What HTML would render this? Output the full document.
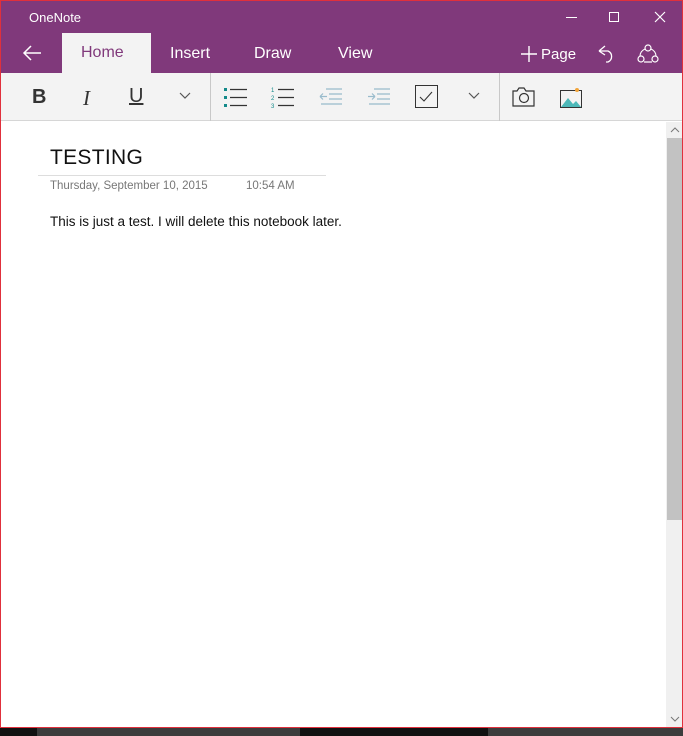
<!DOCTYPE html>
<html><head><meta charset="utf-8"><style>
*{margin:0;padding:0;box-sizing:border-box}
body{width:683px;height:736px;overflow:hidden;background:#111;font-family:"Liberation Sans",sans-serif;position:relative}
.win{position:absolute;left:0;top:0;width:683px;height:728px;border:1px solid #e0303c;background:#fff;overflow:hidden}
.title{position:absolute;left:0;top:0;width:681px;height:72px;background:#80397b;color:#fff}
.t{position:absolute;font-size:13px;left:28px;top:9px}
.tab{position:absolute;top:44px;font-size:16px;color:#fff}
.home{position:absolute;left:61px;top:32px;width:89px;height:40px;background:#f3f3f3;color:#80397b;font-size:16px;padding-top:11px;padding-left:19px}
.tool{position:absolute;left:0;top:72px;width:681px;height:48px;background:#f3f3f3;border-bottom:1px solid #d6d6d6}
.sep{position:absolute;top:0;width:1px;height:48px;background:#c8c8c8}
svg{position:absolute}
.sb{position:absolute;left:665px;top:121px;width:17px;height:606px;background:#f0f0f0}
.thumb{position:absolute;left:666px;top:137px;width:15px;height:382px;background:#c2c2c2}
</style></head><body>
<div class="win">
<div class="title">
<div class="t">OneNote</div>
<div style="position:absolute;left:565px;top:16px;width:11px;height:1px;background:#fff"></div>
<div style="position:absolute;left:608px;top:11px;width:10px;height:10px;border:1px solid #fff"></div>
<svg style="left:653px;top:10px" width="12" height="12"><path d="M1 1L11 11M11 1L1 11" stroke="#fff" stroke-width="1.2"/></svg>
<svg style="left:21px;top:44px" width="20" height="16"><path d="M19 8H2M9 1L2 8L9 15" stroke="#fff" stroke-width="1.5" fill="none"/></svg>
<div class="home">Home</div>
<div class="tab" style="left:169px">Insert</div>
<div class="tab" style="left:253px">Draw</div>
<div class="tab" style="left:337px">View</div>
<svg style="left:519px;top:44px" width="18" height="18"><path d="M9 1V17M1 9H17" stroke="#fff" stroke-width="1.4"/></svg>
<div class="tab" style="left:540px;font-size:15px;top:45px">Page</div>
<svg style="left:596px;top:42px" width="20" height="20"><path d="M2 8L8 3M2 8L8 12M2 8H11A6 6 0 0 1 11 19H9" stroke="#fff" stroke-width="1.3" fill="none"/></svg>
<svg style="left:636px;top:42px" width="22" height="22"><circle cx="11" cy="5" r="3" stroke="#fff" fill="none" stroke-width="1.2"/><circle cx="4" cy="16" r="3" stroke="#fff" fill="none" stroke-width="1.2"/><circle cx="18" cy="16" r="3" stroke="#fff" fill="none" stroke-width="1.2"/><path d="M8 6A8 8 0 0 0 3 13M14 6A8 8 0 0 1 19 13M7 19H15" stroke="#fff" fill="none" stroke-width="1.2"/></svg>
</div>
<div class="tool">
<div style="position:absolute;left:31px;top:13px;font-size:20px;font-weight:bold;color:#333">B</div>
<div style="position:absolute;left:82px;top:13px;font-size:21px;font-style:italic;font-family:'Liberation Serif',serif;color:#333">I</div>
<div style="position:absolute;left:128px;top:12px;font-size:20px;color:#333;text-decoration:underline">U</div>
<svg style="left:178px;top:19px" width="12" height="8"><path d="M1 1L6 6L11 1" stroke="#555" fill="none" stroke-width="1.2"/></svg>
<div class="sep" style="left:209px"></div>
<svg style="left:222px;top:14px" width="26" height="22"><rect x="1" y="1" width="3" height="3" fill="#138a8a"/><rect x="1" y="9" width="3" height="3" fill="#138a8a"/><rect x="1" y="17" width="3" height="3" fill="#138a8a"/><path d="M7 2.5H24M7 10.5H24M7 18.5H24" stroke="#333" stroke-width="1.2"/></svg>
<svg style="left:270px;top:13px" width="26" height="24"><text x="0" y="6" font-size="6" fill="#138a8a" font-family="Liberation Sans">1</text><text x="0" y="14" font-size="6" fill="#138a8a" font-family="Liberation Sans">2</text><text x="0" y="22" font-size="6" fill="#138a8a" font-family="Liberation Sans">3</text><path d="M7 3.5H23M7 11.5H23M7 19.5H23" stroke="#333" stroke-width="1.2"/></svg>
<svg style="left:318px;top:14px" width="24" height="22"><path d="M7 2H23M10 7H23M10 12H23M2 17H23M1 9.5H8M1 9.5L4 6.5M1 9.5L4 12.5" stroke="#9bc" stroke-width="1.2" fill="none"/></svg>
<svg style="left:366px;top:14px" width="24" height="22"><path d="M7 2H23M10 7H23M10 12H23M2 17H23M1 9.5H8M8 9.5L5 6.5M8 9.5L5 12.5" stroke="#9bc" stroke-width="1.2" fill="none"/></svg>
<svg style="left:414px;top:12px" width="24" height="24"><rect x="0.5" y="0.5" width="22" height="22" stroke="#333" fill="none"/><path d="M5 12L9 16L17 7" stroke="#333" fill="none" stroke-width="1.1"/></svg>
<svg style="left:467px;top:19px" width="12" height="8"><path d="M1 1L6 6L11 1" stroke="#555" fill="none" stroke-width="1.2"/></svg>
<div class="sep" style="left:498px"></div>
<svg style="left:511px;top:14px" width="24" height="20"><path d="M1 4H5L7 1H12L14 4H22V19H1Z" stroke="#333" fill="none" stroke-width="1.2"/><circle cx="12" cy="11" r="4.5" stroke="#333" fill="none" stroke-width="1.2"/></svg>
<svg style="left:559px;top:14px" width="24" height="22"><rect x="0.5" y="3.5" width="21" height="17" stroke="#333" fill="none"/><path d="M1 20L8 11L13 17L16 14L21 20Z" fill="#4cb8b8"/><circle cx="17" cy="3" r="2" fill="#f2a43a"/></svg>
</div>
<div style="position:absolute;left:49px;top:145px;font-size:21px;color:#111;letter-spacing:0.3px">TESTING</div>
<div style="position:absolute;left:37px;top:174px;width:288px;height:1px;background:#ddd"></div>
<div style="position:absolute;left:49px;top:179px;font-size:11.5px;color:#777">Thursday, September 10, 2015</div>
<div style="position:absolute;left:245px;top:179px;font-size:11.5px;color:#777">10:54 AM</div>
<div style="position:absolute;left:49px;top:213px;font-size:13.5px;color:#111">This is just a test. I will delete this notebook later.</div>
<div class="sb"></div><div class="thumb"></div>
<svg style="left:669px;top:125px" width="10" height="7"><path d="M1 6L5 2L9 6" stroke="#777" fill="none"/></svg>
<svg style="left:669px;top:715px" width="10" height="7"><path d="M1 1L5 5L9 1" stroke="#777" fill="none"/></svg>
</div>
<div style="position:absolute;left:37px;top:728px;width:263px;height:8px;background:#3c3c3c"></div>
<div style="position:absolute;left:488px;top:728px;width:195px;height:8px;background:#3c3c3c"></div>
</body></html>
